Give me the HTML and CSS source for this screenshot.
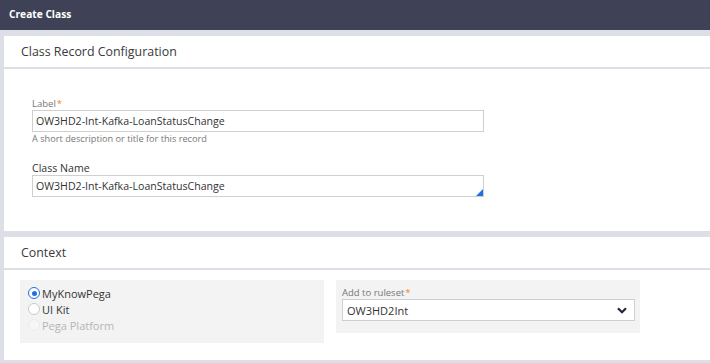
FILE: index.html
```html
<!DOCTYPE html>
<html lang="en">
<head>
  <meta charset="UTF-8" />
  <title>Create Class</title>
  <link rel="stylesheet" href="styles.css">
</head>
<body>
  <div class="topbar">Create Class</div>

  <div class="main">
    <!-- Class record configuration -->
    <div class="panel panel-config">
      <div class="panel-header">Class Record Configuration</div>
      <div class="panel-body">
        <div class="field">
          <label class="label-small">Label<span class="req">*</span></label>
          <input type="text" class="text-input" value="OW3HD2-Int-Kafka-LoanStatusChange">
          <div class="help">A short description or title for this record</div>
        </div>

        <div class="field field-classname">
          <label class="label-normal">Class Name</label>
          <div class="input-wrap">
            <input type="text" class="text-input" value="OW3HD2-Int-Kafka-LoanStatusChange">
            <span class="corner"></span>
          </div>
        </div>
      </div>
    </div>

    <!-- Context -->
    <div class="panel panel-context">
      <div class="panel-header">Context</div>
      <div class="panel-body context-body">
        <div class="box radios">
          <div class="radio-row checked"><span class="radio"></span>MyKnowPega</div>
          <div class="radio-row"><span class="radio"></span>UI Kit</div>
          <div class="radio-row disabled"><span class="radio"></span>Pega Platform</div>
        </div>

        <div class="box ruleset">
          <label class="label-small">Add to ruleset<span class="req">*</span></label>
          <div class="select">
            <span>OW3HD2Int</span>
            <svg width="10" height="7" viewBox="0 0 10 7">
              <path d="M1 1.2 L5 5.2 L9 1.2" fill="none" stroke="#22263f" stroke-width="2.2"/>
            </svg>
          </div>
        </div>
      </div>
    </div>
  </div>
</body>
</html>
```

FILE: styles.css
```css
body {
  margin: 0;
  font-family: 'Open Sans', 'Liberation Sans', sans-serif;
  background-color: #dcdfe5;
  color: #333;
}

.topbar {
  height: 30px;
  line-height: 28px;
  background-color: #3f4157;
  color: #fff;
  font-size: 10.2px;
  font-weight: bold;
  padding-left: 9px;
}

.main {
  padding: 6px 0 0 4px;
}

.panel {
  background-color: #fff;
  margin-bottom: 6px;
}

.panel-header {
  height: 31px;
  line-height: 31px;
  padding-left: 17px;
  font-size: 12.4px;
  color: #3a3a3a;
  border-bottom: 2px solid #dcdfe5;
}

.panel-config .panel-body {
  height: 162px;
  padding: 28px 0 0 28px;
  box-sizing: border-box;
}

.label-small {
  display: block;
  height: 13px;
  line-height: 13px;
  font-size: 9.5px;
  color: #777;
}

.req {
  color: #f0821e;
  margin-left: 1px;
}

.label-normal {
  display: block;
  height: 13px;
  line-height: 13px;
  font-size: 10.6px;
  color: #333;
}

.text-input {
  display: block;
  width: 452px;
  height: 22px;
  box-sizing: border-box;
  border: 1px solid #cfcfcf;
  padding: 0 3px;
  font-family: inherit;
  font-size: 10.6px;
  color: #333;
  outline: none;
  margin: 0;
}

.help {
  height: 13px;
  line-height: 14px;
  font-size: 9.2px;
  color: #777;
}

.field-classname {
  margin-top: 17px;
}

.input-wrap {
  position: relative;
  width: 452px;
}

/* blue resize corner */
.corner {
  position: absolute;
  right: 1px;
  bottom: 1px;
  width: 0;
  height: 0;
  border-left: 7px solid transparent;
  border-bottom: 7px solid #1f6fe5;
}

.context-body {
  display: flex;
  align-items: flex-start;
  gap: 12px;
  padding: 10px 0 17px 16px;
}

.box {
  background-color: #f3f3f3;
  width: 304px;
  box-sizing: border-box;
}

.radios {
  height: 63px;
  padding: 5px 0 0 8px;
}

.radio-row {
  display: flex;
  align-items: center;
  height: 16px;
  font-size: 11px;
  color: #333;
}

.radio {
  width: 12px;
  height: 12px;
  box-sizing: border-box;
  border: 1px solid #c9c9c9;
  border-radius: 50%;
  background: #fff;
  margin-right: 2px;
  position: relative;
}

.checked .radio {
  border-color: #1f6fe5;
}

.checked .radio::after {
  content: "";
  position: absolute;
  left: 2.5px;
  top: 2.5px;
  width: 5px;
  height: 5px;
  border-radius: 50%;
  background: #1f6fe5;
}

.disabled {
  color: #b5b5b5;
}

.disabled .radio {
  border-color: #ececec;
  background: #f6f6f6;
}

.ruleset {
  padding: 6px 5px 12px 6px;
}

.select {
  display: flex;
  align-items: center;
  justify-content: space-between;
  height: 22px;
  box-sizing: border-box;
  background: #fff;
  border: 1px solid #cfcfcf;
  padding: 0 7px 0 4px;
  font-size: 11px;
  color: #333;
}
```
